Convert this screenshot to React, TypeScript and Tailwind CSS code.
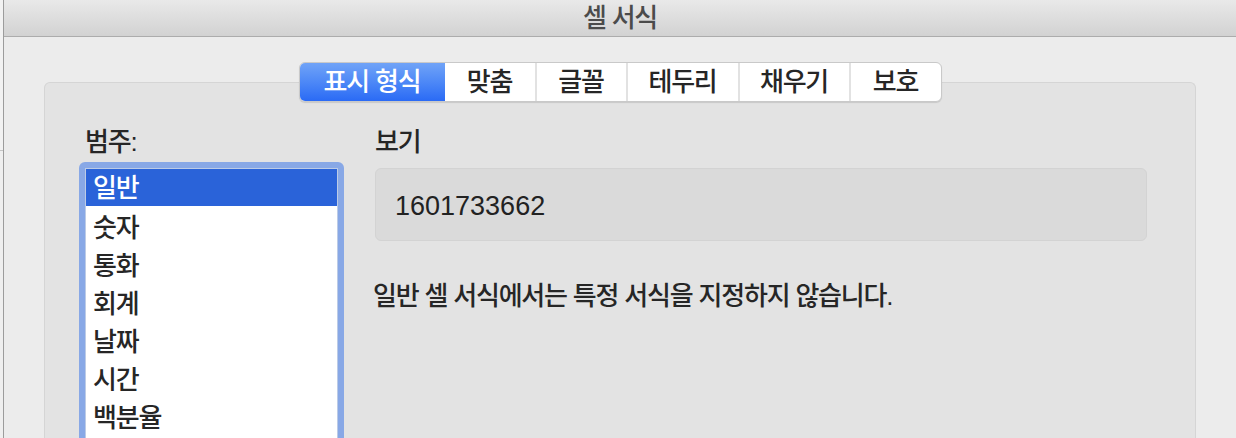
import React from "react"

const font = "font-['Liberation_Sans','Noto_Sans_CJK_KR',sans-serif]"

const tabs = [
  { label: "표시 형식", w: "w-[145px]" },
  { label: "맞춤", w: "w-[90px]" },
  { label: "글꼴", w: "w-[91px]" },
  { label: "테두리", w: "w-[112px]" },
  { label: "채우기", w: "w-[111px]" },
  { label: "보호", w: "w-[92px]" },
]

const categories = ["일반", "숫자", "통화", "회계", "날짜", "시간", "백분율"]

export default function App() {
  return (
    <div className={`${font} flex h-[438px] w-[1236px] overflow-hidden bg-[#f4f4f4] font-medium tracking-[-1.2px] text-[#262626]`}>
      {/* sliver of the app behind the sheet */}
      <div className="flex w-[3px] shrink-0 flex-col">
        <div className="h-[150px] bg-[#f2f2f2]" />
        <div className="h-px bg-[#c4c4c4]" />
        <div className="flex-1 bg-[#efefef]" />
      </div>

      <div className="flex flex-1 flex-col border-l border-[#9c9c9c] bg-[#ececec]">
        {/* title bar */}
        <div className="flex h-[37px] shrink-0 items-center justify-center border-b border-[#acacac] bg-gradient-to-b from-[#e9e9e9] to-[#d2d2d2]">
          <span className="text-[26px] leading-none text-[#4b4b4b]">셀 서식</span>
        </div>

        {/* tabs */}
        <div className="relative z-10 mt-[25px] flex justify-center">
          <div className="flex h-[40px] overflow-hidden rounded-[6px] border border-[#c9c9c9] bg-white shadow-[0_1px_1px_rgba(0,0,0,0.12)]">
            {tabs.map((t, i) => (
              <div
                key={t.label}
                className={`${t.w} flex items-center justify-center text-[26px] leading-none ${
                  i === 0
                    ? "bg-gradient-to-b from-[#70a3f7] to-[#2a6af5] text-white"
                    : i === 1
                      ? ""
                      : "border-l-2 border-[#e2e2e2]"
                }`}
              >
                {t.label}
              </div>
            ))}
          </div>
        </div>

        {/* group box */}
        <div className="mx-[40px] -mt-[20px] flex flex-1 gap-[31px] rounded-t-[6px] border border-b-0 border-[#d5d5d5] bg-[#e3e3e3] pl-[34px] pt-[44px]">
          <div className="flex w-[265px] flex-col">
            <div className="ml-[6px] h-[30px] text-[26px] leading-[30px]">범주:</div>
            <div className="mt-[5px] flex-1 rounded-t-[6px] bg-[#88a8e6] px-[6px] pt-[6px]">
              <div className="h-full border border-b-0 border-[#bccbe6] bg-white">
                {categories.map((c, i) => (
                  <div
                    key={c}
                    className={`flex items-center pl-[7px] text-[26px] leading-none ${
                      i === 0 ? "mb-[3px] h-[37px] bg-[#2a63d9] text-white" : "h-[38px]"
                    }`}
                  >
                    {c}
                  </div>
                ))}
              </div>
            </div>
          </div>

          <div className="flex w-[772px] flex-col">
            <div className="h-[30px] text-[26px] leading-[30px]">보기</div>
            <div className="mt-[11px] flex h-[73px] items-center rounded-[6px] border border-[#d3d3d3] bg-[#dadada] pl-[19px] pt-[4px] text-[27px] font-normal leading-none tracking-normal text-[#222]">
              1601733662
            </div>
            <div className="mt-[40px] -ml-[2px] h-[30px] text-[26px] leading-[30px]">
              일반 셀 서식에서는 특정 서식을 지정하지 않습니다.
            </div>
          </div>
        </div>
      </div>
    </div>
  )
}
